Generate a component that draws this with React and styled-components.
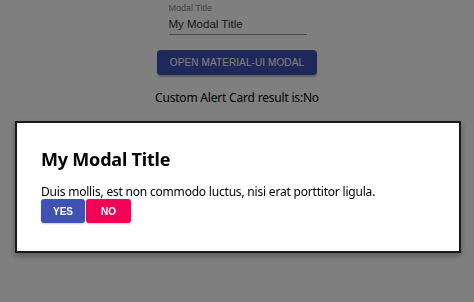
import React from 'react';
import styled, { createGlobalStyle } from 'styled-components';

const GlobalStyle = createGlobalStyle`
  html, body {
    margin: 0;
    padding: 0;
    background: #ffffff;
    height: 100%;
  }
  body {
    font-family: "Noto Sans", "Open Sans", sans-serif;
    overflow: hidden;
  }
`;

const Page = styled.div`
  display: flex;
  flex-direction: column;
  align-items: center;
  padding-top: 3px;
`;

const Field = styled.div`
  display: flex;
  flex-direction: column;
  width: 138px;
  margin-left: 1px;
  border-bottom: 1px solid rgba(0, 0, 0, 0.42);
  font-family: "Liberation Sans", Arial, sans-serif;
`;

const FieldLabel = styled.label`
  font-size: 9px;
  line-height: 10px;
  color: rgba(0, 0, 0, 0.54);
`;

const FieldValue = styled.div`
  font-size: 11.5px;
  line-height: 16px;
  padding: 3px 0 2px;
  color: rgba(0, 0, 0, 0.87);
`;

const OpenButton = styled.button`
  margin-top: 15px;
  width: 160px;
  height: 25px;
  padding: 0;
  border: none;
  border-radius: 4px;
  background: #3f51b5;
  color: #ffffff;
  font-family: "Liberation Sans", Arial, sans-serif;
  font-weight: 400;
  font-size: 10px;
  letter-spacing: 0.1px;
  text-transform: uppercase;
  box-shadow: 0 2px 2px rgba(0, 0, 0, 0.25);
`;

const ResultText = styled.p`
  margin: 15px 0 0;
  font-size: 12px;
  letter-spacing: -0.2px;
  line-height: 16px;
  color: #000000;
`;

const Overlay = styled.div`
  position: fixed;
  inset: 0;
  background: rgba(0, 0, 0, 0.5);
`;

const Modal = styled.div`
  position: fixed;
  top: 121px;
  left: 15px;
  width: 446px;
  height: 132px;
  box-sizing: border-box;
  background: #ffffff;
  border: 2px solid #1a1a1a;
  padding: 24px 24px;
  box-shadow: 0 3px 6px rgba(0, 0, 0, 0.3);
`;

const ModalTitle = styled.h2`
  margin: 0 0 13px;
  font-size: 18px;
  line-height: 24px;
  font-weight: 700;
  letter-spacing: -0.2px;
  color: #000000;
`;

const ModalBody = styled.p`
  margin: 0;
  font-size: 12px;
  line-height: 15px;
  letter-spacing: -0.2px;
  color: #000000;
`;

const Actions = styled.div`
  display: flex;
`;

const ActionButton = styled.button`
  height: 24px;
  width: ${(p) => p.$width}px;
  padding: 0;
  border: none;
  border-radius: 3px;
  background: ${(p) => p.$color};
  color: #ffffff;
  font-family: "Liberation Sans", Arial, sans-serif;
  font-weight: 700;
  font-size: 10px;
  margin-right: 1px;
  box-shadow: 0 1px 2px rgba(0, 0, 0, 0.2);
`;

export default function App() {
  return (
    <>
      <GlobalStyle />
      <Page>
        <Field>
          <FieldLabel>Modal Title</FieldLabel>
          <FieldValue>My Modal Title</FieldValue>
        </Field>
        <OpenButton>Open Material-UI Modal</OpenButton>
        <ResultText>Custom Alert Card result is:No</ResultText>
      </Page>
      <Overlay />
      <Modal>
        <ModalTitle>My Modal Title</ModalTitle>
        <ModalBody>Duis mollis, est non commodo luctus, nisi erat porttitor ligula.</ModalBody>
        <Actions>
          <ActionButton $color="#3f51b5" $width={44}>YES</ActionButton>
          <ActionButton $color="#f50057" $width={45}>NO</ActionButton>
        </Actions>
      </Modal>
    </>
  );
}
